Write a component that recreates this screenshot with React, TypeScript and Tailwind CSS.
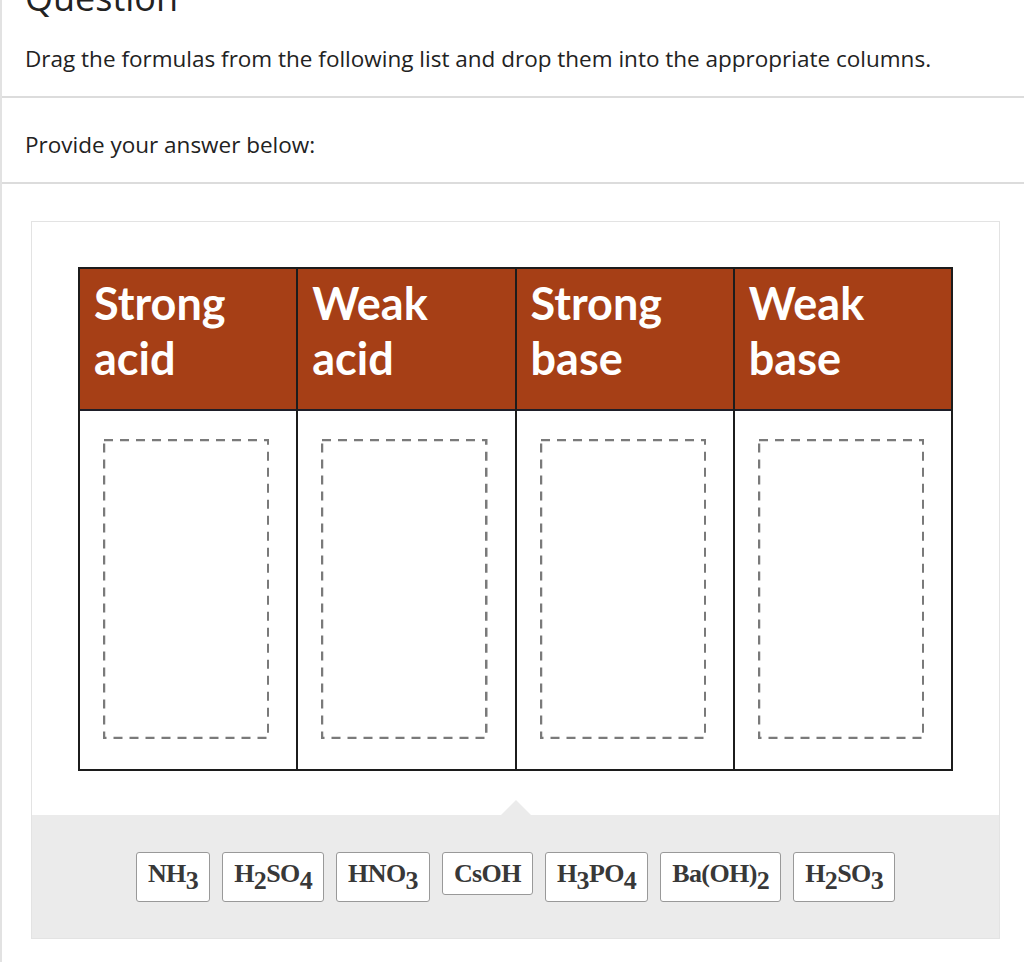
import React from 'react';

type Part = { t: string; sub?: boolean };

const columns = [
  ['Strong', 'acid'],
  ['Weak', 'acid'],
  ['Strong', 'base'],
  ['Weak', 'base'],
];

const formulas: Part[][] = [
  [{ t: 'NH' }, { t: '3', sub: true }],
  [{ t: 'H' }, { t: '2', sub: true }, { t: 'SO' }, { t: '4', sub: true }],
  [{ t: 'HNO' }, { t: '3', sub: true }],
  [{ t: 'CsOH' }],
  [{ t: 'H' }, { t: '3', sub: true }, { t: 'PO' }, { t: '4', sub: true }],
  [{ t: 'Ba(OH)' }, { t: '2', sub: true }],
  [{ t: 'H' }, { t: '2', sub: true }, { t: 'SO' }, { t: '3', sub: true }],
];

const FormulaChip: React.FC<{ parts: Part[] }> = ({ parts }) => (
  <div className="bg-white border border-[#999] rounded-[3px] px-[11px] py-[6px] font-['Liberation_Serif',serif] font-bold text-[26px] leading-[29px] text-[#383838] tracking-[-0.6px]">
    {parts.map((p, i) =>
      p.sub ? (
        <span key={i} className="align-[-7px]">{p.t}</span>
      ) : (
        <span key={i}>{p.t}</span>
      )
    )}
  </div>
);

// dashed drop target, drawn so the dash length matches the reference
const DropZone = () => (
  <div className="h-[300px] w-full">
    <svg width="100%" height="100%" className="block">
      <rect
        x="1"
        y="1"
        width="calc(100% - 2px)"
        height="calc(100% - 2px)"
        fill="none"
        stroke="#7a7a7a"
        strokeWidth="2.5"
        strokeDasharray="9 7"
      />
    </svg>
  </div>
);

export default function App() {
  return (
    <div className="min-h-[962px] flex flex-col bg-white border-l-2 border-[#e2e2e2] font-['Open_Sans',sans-serif] text-[#222]">
      {/* Question header */}
      <section className="h-[98px] flex flex-col border-b-2 border-[#dcdcdc] px-[23px]">
        <h1 className="-mt-[24px] text-[36px] leading-[43px] font-normal">Question</h1>
        <p className="mt-[25px] text-[22.5px] leading-[30px]">
          Drag the formulas from the following list and drop them into the appropriate columns.
        </p>
      </section>

      <section className="h-[86px] border-b-2 border-[#dcdcdc] px-[23px] pt-[32px]">
        <p className="text-[22.5px] leading-[30px]">Provide your answer below:</p>
      </section>

      {/* Answer card */}
      <div className="mt-[37px] ml-[29px] w-[969px] border border-[#e3e3e3] bg-white">
        <div className="pt-[45px] pb-[44px]">
          <div className="mx-auto w-[875px] border-2 border-[#1c1c1c] flex">
            {columns.map((c, i) => (
              <div
                key={i}
                className={`flex-1 flex flex-col ${i < columns.length - 1 ? 'border-r-2 border-[#1c1c1c]' : ''}`}
              >
                <div className="h-[142px] bg-[#a63f16] border-b-2 border-[#1e1e28] pl-[14px] pt-[7px] font-['Lato',sans-serif] font-bold text-[45px] leading-[55px] text-white">
                  <div>{c[0]}</div>
                  <div>{c[1]}</div>
                </div>
                <div className="h-[358px] pt-[28px] pl-[23px] pr-[27px]">
                  <DropZone />
                </div>
              </div>
            ))}
          </div>
        </div>

        {/* Formula bank */}
        <div className="relative h-[123px] bg-[#ebebeb] pt-[37px]">
          <div className="absolute -top-[15px] left-1/2 -translate-x-1/2 w-0 h-0 border-l-[15px] border-r-[15px] border-b-[15px] border-l-transparent border-r-transparent border-b-[#ebebeb]" />
          <div className="flex justify-center items-start gap-[12px]">
            {formulas.map((f, i) => (
              <FormulaChip key={i} parts={f} />
            ))}
          </div>
        </div>
      </div>
    </div>
  );
}
